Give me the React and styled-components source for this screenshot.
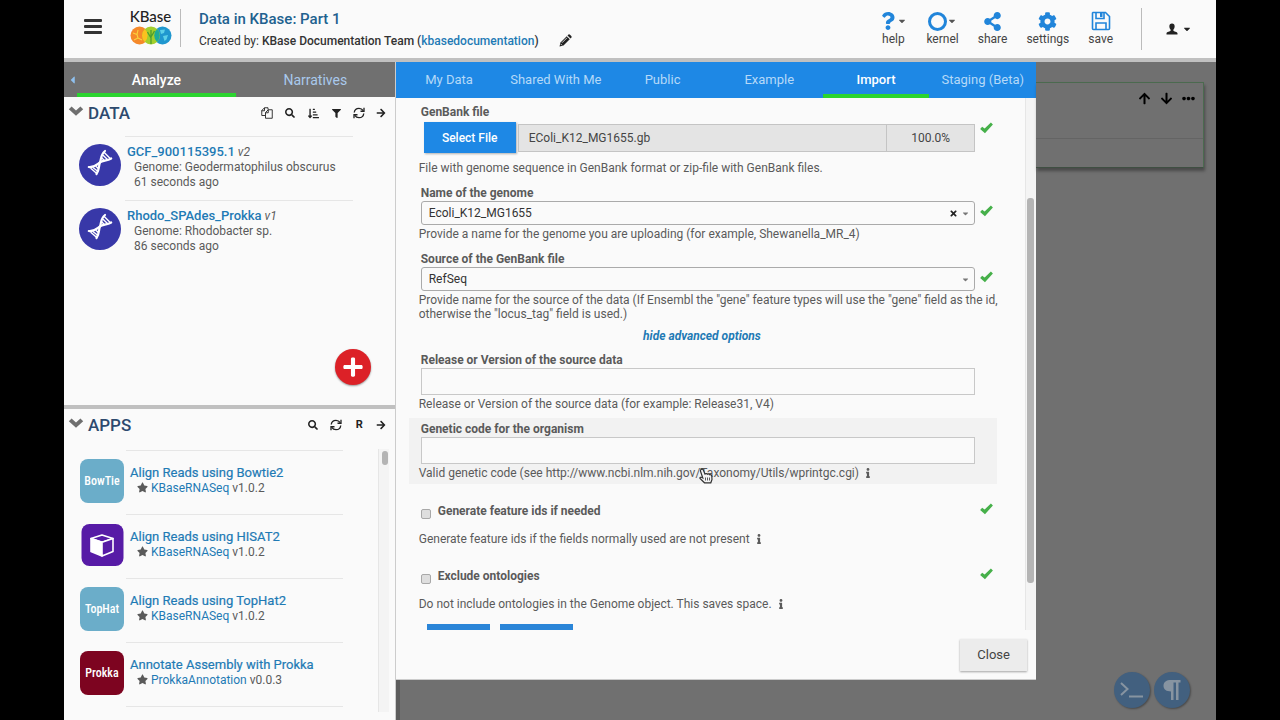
import React, { useState } from 'react';
import styled, { createGlobalStyle, css } from 'styled-components';
import {
  FaArrowDown,
  FaArrowRight,
  FaArrowUp,
  FaCaretDown,
  FaCaretLeft,
  FaCog,
  FaEllipsisH,
  FaFilter,
  FaInfo,
  FaPlus,
  FaQuestion,
  FaSearch,
  FaShareAlt,
  FaSortAmountDownAlt,
  FaStar,
  FaTimes,
} from 'react-icons/fa';

const colors = {
  paper: '#fafafa',
  text: '#5a5a5a',
  dark: '#333',
  link: '#1f7ab5',
  title: '#21618f',
  heading: '#2d4a6e',
  primary: '#1e88e5',
  active: '#2bd42f',
  overlay: '#707070',
  rule: '#e6e6e6',
  bar: '#c0c0c0',
};

const GlobalStyle = createGlobalStyle`
  * {
    box-sizing: border-box;
  }

  body {
    margin: 0;
    background: #000;
    color: ${colors.text};
    font: 12px/16px Roboto, 'Liberation Sans', sans-serif;
  }

  button,
  input,
  select {
    margin: 0;
    border: 0;
    padding: 0;
    background: none;
    color: inherit;
    font: inherit;
  }

  button {
    cursor: pointer;
  }

  a {
    color: ${colors.link};
    text-decoration: none;
  }
`;

/* icons */

const RefreshIcon = () => (
  <svg width="12" height="12" viewBox="0 0 24 24" aria-hidden="true">
    <g fill="none" stroke="currentColor" strokeWidth="2.6">
      <path d="M2.5 11 C3 6 7 2.6 12 2.6 C15.500 2.6 18.500 4.300 20.500 7.200" />
      <path d="M21.500 13 C21 18 17 21.400 12 21.400 C8.500 21.400 5.500 19.700 3.500 16.800" />
      <path d="M22 1.500 V8.500 H15" />
      <path d="M2 22.500 V15.500 H9" />
    </g>
  </svg>
);

const CopyIcon = () => (
  <svg width="12" height="12" viewBox="0 0 24 24" aria-hidden="true">
    <g fill="none" stroke="currentColor" strokeWidth="1.8">
      <path d="M8 17 H1.500 V7 L7 1.500 H14 V5" />
      <path d="M1.500 7.500 H7 V1.500" />
      <path d="M9 11 L14.500 5.500 H22.500 V22.500 H9 Z" />
      <path d="M9 11.500 H14.500 V5.500" />
    </g>
  </svg>
);

const SaveIcon = () => (
  <svg width="20" height="20" viewBox="0 0 20 20" aria-hidden="true">
    <g fill="none" stroke="currentColor" strokeWidth="1.6">
      <path d="M2 1.500 H14.500 L18.500 5.500 V17.500 Q18.500 18.500 17.500 18.500 H2.500 Q1.500 18.500 1.500 17.500 V2 Z" />
      <path d="M5 1.500 V7.500 H13 V1.500" />
      <path d="M5 18.500 V12 H15 V18.500" />
    </g>
    <path d="M9 2 H11.500 V6 H9 Z" fill="currentColor" />
  </svg>
);

const PencilIcon = () => (
  <svg width="13" height="13" viewBox="0 0 26 26" aria-hidden="true">
    <g fill="#222">
      <path d="M1 25 L3 17 L15.500 4.500 L21.500 10.500 L9 23 Z" />
      <path d="M17 3 L19 1 Q20.500 0 22 1.500 L24.500 4 Q26 5.500 25 7 L23 9 Z" />
    </g>
    <path fill="none" stroke="#fafafa" strokeWidth="1.600" d="M6 17.500 L16 7.500 M3.500 20 L6 22.500" />
  </svg>
);

const UserIcon = () => (
  <svg width="12" height="12" viewBox="0 0 24 24" aria-hidden="true">
    <path
      fill="currentColor"
      d="M12 1 C15.500 1 17.500 3.500 17.300 7 C17.200 10 15.800 12 14.800 13.400 L14.800 15.500 C15.500 17 22.500 17.500 23 20.500 V23 H1 V20.500 C1.500 17.500 8.500 17 9.200 15.500 L9.200 13.400 C8.200 12 6.800 10 6.700 7 C6.500 3.500 8.500 1 12 1 Z"
    />
  </svg>
);

const TickIcon = () => (
  <svg width="13" height="12" viewBox="0 0 26 24" aria-hidden="true">
    <path
      fill="#46b04a"
      d="M21.800 1 L25.800 5.200 L9.900 22.300 L0.300 14 L4.300 9.300 L9.300 13.200 Z"
    />
  </svg>
);

const ChevronIcon = () => (
  <svg width="16" height="10" viewBox="0 0 16 10" aria-hidden="true">
    <path fill="#6f6f6f" d="M0.800 3.200 L3.600 0.500 L8 4.500 L12.400 0.500 L15.200 3.200 L8 9.800 Z" />
  </svg>
);

const DnaIcon = () => (
  <svg width="42" height="42" viewBox="0 0 42 42" aria-hidden="true">
    <circle cx="21" cy="21" r="21" fill="#3838a8" />
    <g fill="none" stroke="#fff" strokeLinecap="round">
      <path strokeWidth="2.200" d="M9.800 23 C16 23.500 18 20.500 21 18.300 C24 16.200 28 17.200 32.200 14.500" />
      <path strokeWidth="2.200" d="M17.500 30 C20.500 26 19.500 22 21 18.300 C22.500 14.500 21.500 10.500 26 7" />
      <path strokeWidth="1.400" d="M12 24.500 L17.200 29 M14.200 23.800 L18.700 27.300 M17 22.500 L19.500 24.600" />
      <path strokeWidth="1.400" d="M25.500 8.800 L30.700 14 M23.800 11 L28.200 15.300 M23 14 L25 16.200" />
    </g>
  </svg>
);

const CubeIcon = () => (
  <svg width="44" height="44" viewBox="0 0 44 44" aria-hidden="true">
    <rect width="42" height="42" x="1.500" y="1" rx="8" fill="#571ba6" />
    <g stroke="#fff" strokeWidth="1.600" strokeLinejoin="round">
      <path fill="#571ba6" d="M22 12 L33 15.500 L22 19.300 L11 15.500 Z" />
      <path fill="#fff" d="M11 15.500 L22 19.300 V33 L11 28.500 Z" />
      <path fill="#571ba6" d="M33 15.500 L22 19.300 V33 L33 28.500 Z" />
    </g>
  </svg>
);

const LogoMark = () => (
  <svg width="42" height="19" viewBox="0 0 42 19" aria-hidden="true">
    <circle cx="9.500" cy="9.500" r="9" fill="#f5892a" />
    <circle cx="32.500" cy="9.500" r="9" fill="#1f97cf" />
    <circle cx="21" cy="9.500" r="9" fill="#a3cf2c" />
    <path fill="#fbc21f" d="M14.800 3 A9 9 0 0 1 14.800 16 A9 9 0 0 1 14.800 3 Z" />
    <path fill="#1cab9a" d="M27 3 A9 9 0 0 1 27 16 A9 9 0 0 1 27 3 Z" />
    <path
      fill="none"
      stroke="#fbd23c"
      strokeWidth="1.100"
      d="M3 7 L7 8.500 L8 4 M7 8.500 L8 12 L4 14 M8 12 L12 14"
    />
    <path
      fill="none"
      stroke="#4c9e2f"
      strokeWidth="1.300"
      d="M21 18 V9 M21 12 L17.500 6 M21 11 L24.500 5 M21 9 V4"
    />
    <path fill="#5cd0e8" d="M30 4 L35 3.500 L34 7 L31 8 Z M33 10 L38 9 L36.500 13.500 L34.500 15 Z" />
  </svg>
);

const TerminalIcon = () => (
  <svg width="26" height="18" viewBox="0 0 26 18" aria-hidden="true">
    <g fill="none" stroke="#8794a1" strokeWidth="2">
      <path d="M2 2 L8.500 8 L2 14" />
      <path d="M10 15.500 H24" />
    </g>
  </svg>
);

const ParagraphIcon = () => (
  <svg width="18" height="22" viewBox="0 0 18 22" aria-hidden="true">
    <path
      fill="#8794a1"
      d="M8 1 H17.500 V3.500 H15.500 V21 H13 V3.500 H10.500 V21 H8 V12.500 C3.500 12.500 0.500 10.500 0.500 6.800 C0.500 3 3.500 1 8 1 Z"
    />
  </svg>
);

const HandIcon = () => (
  <svg width="14" height="16" viewBox="0 0 14 16" aria-hidden="true">
    <path
      fill="#f4f4f4"
      stroke="#333"
      strokeWidth="1.200"
      d="M2 1.500 C3 0.600 4 1.200 4.400 2.200 L6 6 C7 5.300 8 5.500 8.400 6.200 C9.300 5.700 10.200 6 10.600 6.800 C11.800 6.400 12.600 7 12.800 8.200 L13 11.500 L11.800 14.800 H5.500 L1 10.500 C0.600 9.500 1.800 8.800 3 9.600 L3.800 10 L1.600 3.500 C1.300 2.600 1.400 2 2 1.500 Z"
    />
    <path stroke="#333" strokeWidth="0.800" d="M6.500 9.500 V12.500 M8.500 9.500 V12.500 M10.500 9.500 V12.500" />
  </svg>
);

/* data */

const tools = [
  { label: 'help', icon: <FaQuestion size={18} />, menu: true },
  { label: 'kernel', icon: 'ring', menu: true },
  { label: 'share', icon: <FaShareAlt size={19} /> },
  { label: 'settings', icon: <FaCog size={19} /> },
  { label: 'save', icon: <SaveIcon /> },
];

const dataItems = [
  {
    name: 'GCF_900115395.1',
    version: 'v2',
    type: 'Genome: Geodermatophilus obscurus',
    age: '61 seconds ago',
  },
  {
    name: 'Rhodo_SPAdes_Prokka',
    version: 'v1',
    type: 'Genome: Rhodobacter sp.',
    age: '86 seconds ago',
  },
];

const apps = [
  { name: 'Align Reads using Bowtie2', module: 'KBaseRNASeq', version: 'v1.0.2', badge: 'BowTie', color: '#6badc9' },
  { name: 'Align Reads using HISAT2', module: 'KBaseRNASeq', version: 'v1.0.2' },
  { name: 'Align Reads using TopHat2', module: 'KBaseRNASeq', version: 'v1.0.2', badge: 'TopHat', color: '#6badc9' },
  { name: 'Annotate Assembly with Prokka', module: 'ProkkaAnnotation', version: 'v0.0.3', badge: 'Prokka', color: '#7d0420' },
];

const importTabs = ['My Data', 'Shared With Me', 'Public', 'Example', 'Import', 'Staging (Beta)'];

/* components */

const Header = () => (
  <SHeader>
    <MenuButton aria-label="Menu">
      <span />
      <span />
      <span />
    </MenuButton>
    <Logo href="#home">
      KBase
      <LogoMark />
    </Logo>
    <Heading>
      <h1>Data in KBase: Part 1</h1>
      <p>
        Created by:{' '}
        <b>
          KBase Documentation Team (<a href="#user">kbasedocumentation</a>)
        </b>
        <IconButton aria-label="Edit">
          <PencilIcon />
        </IconButton>
      </p>
    </Heading>
    <Tools>
      {tools.map(({ label, icon, menu }) => (
        <Tool key={label}>
          <span>
            {icon === 'ring' ? <Ring /> : icon}
            {menu && <FaCaretDown size={10} color="#555" />}
          </span>
          {label}
        </Tool>
      ))}
    </Tools>
    <UserButton aria-label="User">
      <UserIcon />
      <FaCaretDown size={10} />
    </UserButton>
  </SHeader>
);

const DataSection = () => (
  <Section $grow={308}>
    <SectionHeader>
      <ChevronIcon />
      <h2>DATA</h2>
      <IconButton aria-label="Copy"><CopyIcon /></IconButton>
      <IconButton aria-label="Search"><FaSearch size={10} /></IconButton>
      <IconButton aria-label="Sort"><FaSortAmountDownAlt size={11} /></IconButton>
      <IconButton aria-label="Filter"><FaFilter size={9} /></IconButton>
      <IconButton aria-label="Refresh"><RefreshIcon /></IconButton>
      <IconButton aria-label="Expand"><FaArrowRight size={10} /></IconButton>
    </SectionHeader>
    <List $pad="11px 42px 0 15px">
      {dataItems.map(({ name, version, type, age }) => (
        <DataItem key={name}>
          <DnaIcon />
          <div>
            <a href="#data">{name}</a> <i>{version}</i>
            <p>{type}</p>
            <p>{age}</p>
          </div>
        </DataItem>
      ))}
    </List>
    <AddButton aria-label="Add data">
      <FaPlus size={22} />
    </AddButton>
  </Section>
);

const AppsSection = () => (
  <Section $grow={311}>
    <SectionHeader>
      <ChevronIcon />
      <h2>APPS</h2>
      <IconButton aria-label="Search"><FaSearch size={10} /></IconButton>
      <IconButton aria-label="Refresh"><RefreshIcon /></IconButton>
      <IconButton>R</IconButton>
      <IconButton aria-label="Expand"><FaArrowRight size={10} /></IconButton>
    </SectionHeader>
    <Scroller>
      <List $pad="1px 35px 0 16px">
        {apps.map(({ name, module, version, badge, color }) => (
          <AppItem key={name}>
            {badge ? <Badge $color={color}>{badge}</Badge> : <CubeIcon />}
            <div>
              <a href="#app">{name}</a>
              <p>
                <FaStar size={11} />
                <a href="#module">{module}</a> {version}
              </p>
            </div>
          </AppItem>
        ))}
        <EndRule />
      </List>
      <Track>
        <Thumb />
      </Track>
    </Scroller>
  </Section>
);

const Tick = () => (
  <STick>
    <TickIcon />
  </STick>
);

const ImportForm = () => {
  const [file] = useState('EColi_K12_MG1655.gb');
  const [release, setRelease] = useState('');
  const [code, setCode] = useState('');

  return (
    <Form onSubmit={e => e.preventDefault()}>
      <Field>
        <label htmlFor="file">GenBank file</label>
        <Row $upload>
          <SelectFile type="button">Select File</SelectFile>
          <FileName id="file" readOnly value={file} />
          <Progress>100.0%</Progress>
          <Tick />
        </Row>
        <Help $gap={8}>
          File with genome sequence in GenBank format or zip-file with GenBank files.
        </Help>
      </Field>
      <Field>
        <label htmlFor="name">Name of the genome</label>
        <Row>
          <SelectBox>
            <select id="name">
              <option>Ecoli_K12_MG1655</option>
            </select>
            <button type="button" aria-label="Clear">
              <FaTimes size={9} />
            </button>
            <FaCaretDown size={9} color="#777" />
          </SelectBox>
          <Tick />
        </Row>
        <Help>Provide a name for the genome you are uploading (for example, Shewanella_MR_4)</Help>
      </Field>
      <Field>
        <label htmlFor="source">Source of the GenBank file</label>
        <Row>
          <SelectBox>
            <select id="source">
              <option>RefSeq</option>
            </select>
            <FaCaretDown size={9} color="#777" />
          </SelectBox>
          <Tick />
        </Row>
        <Help>
          Provide name for the source of the data (If Ensembl the "gene" feature types will use the
          "gene" field as the id, otherwise the "locus_tag" field is used.)
        </Help>
      </Field>
      <Advanced href="#advanced">hide advanced options</Advanced>
      <Field>
        <label htmlFor="release">Release or Version of the source data</label>
        <Row>
          <TextInput id="release" value={release} onChange={e => setRelease(e.target.value)} />
          <STick />
        </Row>
        <Help>Release or Version of the source data (for example: Release31, V4)</Help>
      </Field>
      <Field $hover>
        <label htmlFor="code">Genetic code for the organism</label>
        <Row>
          <TextInput id="code" value={code} onChange={e => setCode(e.target.value)} />
          <STick />
        </Row>
        <Help>
          Valid genetic code (see http://www.ncbi.nlm.nih.gov/
          <Pointer>
            <HandIcon />
          </Pointer>
          Taxonomy/Utils/wprintgc.cgi)
          <FaInfo size={10} />
        </Help>
      </Field>
      <Field $check>
        <Row>
          <CheckLabel>
            <input type="checkbox" />
            Generate feature ids if needed
          </CheckLabel>
          <Tick />
        </Row>
        <Help $gap={13}>
          Generate feature ids if the fields normally used are not present
          <FaInfo size={10} />
        </Help>
      </Field>
      <Field $check>
        <Row>
          <CheckLabel>
            <input type="checkbox" />
            Exclude ontologies
          </CheckLabel>
          <Tick />
        </Row>
        <Help $gap={13}>
          Do not include ontologies in the Genome object. This saves space.
          <FaInfo size={10} />
        </Help>
      </Field>
      <Actions>
        <ActionButton $width={63} aria-label="Import" />
        <ActionButton $width={73} aria-label="Reset" type="reset" />
      </Actions>
    </Form>
  );
};

const App = () => (
  <Stage>
    <GlobalStyle />
    <Header />
    <Workspace>
      <Sidebar>
        <SideTabs>
          <IconButton aria-label="Collapse"><FaCaretLeft size={12} color="#8fc1f0" /></IconButton>
          <SideTab $active>Analyze</SideTab>
          <SideTab>Narratives</SideTab>
        </SideTabs>
        <DataSection />
        <Splitter />
        <AppsSection />
      </Sidebar>
      <PanelColumn>
        <Panel>
          <Tabs>
            {importTabs.map(tab => (
              <Tab key={tab} $active={tab === 'Import'}>
                {tab}
              </Tab>
            ))}
          </Tabs>
          <PanelBody>
            <ImportForm />
            <Track $wide>
              <Thumb $wide />
            </Track>
          </PanelBody>
          <Footer>
            <CloseButton>Close</CloseButton>
          </Footer>
        </Panel>
        <EdgeShadow />
      </PanelColumn>
      <Notebook>
        <Cell>
          <CellTools>
            <IconButton aria-label="Move up"><FaArrowUp size={13} /></IconButton>
            <IconButton aria-label="Move down"><FaArrowDown size={13} /></IconButton>
            <IconButton aria-label="More"><FaEllipsisH size={13} /></IconButton>
          </CellTools>
        </Cell>
        <FloatingButtons>
          <RoundButton aria-label="Add code cell"><TerminalIcon /></RoundButton>
          <RoundButton aria-label="Add text cell"><ParagraphIcon /></RoundButton>
        </FloatingButtons>
      </Notebook>
    </Workspace>
  </Stage>
);

export default App;

/* styles */

const center = css`
  display: flex;
  align-items: center;
  justify-content: center;
`;

const Stage = styled.div`
  display: flex;
  flex-direction: column;
  height: 100vh;
  margin: 0 5%;
  overflow: hidden;
  background: ${colors.overlay};
`;

const IconButton = styled.button`
  ${center};
  color: #222;
  font-weight: 700;
  font-size: 11px;
`;

const MenuButton = styled.button`
  display: grid;
  gap: 3px;
  width: 18px;
  margin-bottom: 6px;

  span {
    height: 3px;
    border-radius: 1px;
    background: #333;
  }
`;

const SHeader = styled.header`
  display: flex;
  align-items: center;
  flex: none;
  height: 62px;
  padding: 0 24px 0 20px;
  border-bottom: 4px solid ${colors.bar};
  background: ${colors.paper};
`;

const Logo = styled.a`
  display: flex;
  flex-direction: column;
  align-items: center;
  width: 79px;
  margin-bottom: 2px;
  padding-left: 19px;
  border-right: 1px solid #bbb;
  color: #222;
  font: 500 15px/14px Lato, sans-serif;

  svg {
    margin: 3px 0 2px;
  }
`;

const Heading = styled.div`
  flex: 1;
  padding-left: 18px;

  h1 {
    margin: 0 0 5px;
    color: ${colors.title};
    font: 500 15px/18px Roboto, sans-serif;
  }

  p {
    display: flex;
    align-items: center;
    margin: 0;
    color: ${colors.dark};
    white-space: pre;
  }

  b {
    font-weight: 500;
  }

  button {
    margin-left: 20px;
  }
`;

const Tools = styled.nav`
  display: flex;
  gap: 19px;
  margin-right: 28px;
`;

const Tool = styled.button`
  color: #444;

  span {
    ${center};
    height: 20px;
    color: #2185da;
  }
`;

const Ring = styled.i`
  width: 19px;
  height: 19px;
  border: 3px solid #2185da;
  border-radius: 50%;
`;

const UserButton = styled.button`
  ${center};
  gap: 4px;
  height: 42px;
  padding-left: 24px;
  border-left: 1px solid #bbb;
  color: #222;
`;

const Workspace = styled.main`
  display: flex;
  flex: 1;
  min-height: 0;
`;

const Sidebar = styled.aside`
  display: flex;
  flex-direction: column;
  flex: 331 1 0;
  min-width: 0;
  border-right: 1px solid #ccc;
  background: ${colors.paper};
`;

const SideTabs = styled.div`
  display: flex;
  flex: none;
  height: 35px;
  padding-left: 4px;
  background: ${colors.overlay};

  ${IconButton} {
    width: 9px;
  }
`;

const SideTab = styled.button`
  flex: 1;
  border-bottom: 4px solid ${p => (p.$active ? colors.active : 'transparent')};
  padding-top: 4px;
  color: ${p => (p.$active ? '#fff' : '#a9c9ec')};
  font-weight: ${p => (p.$active ? 500 : 400)};
  font-size: 14px;
`;

const Section = styled.section`
  position: relative;
  display: flex;
  flex-direction: column;
  flex: ${p => p.$grow} 1 0;
  min-height: 0;
`;

const SectionHeader = styled.div`
  display: flex;
  align-items: center;
  flex: none;
  height: 24px;
  margin-top: 4px;
  padding: 0 4px;

  h2 {
    flex: 1;
    margin: 0 0 0 4px;
    color: ${colors.heading};
    font: 500 17px/24px Roboto, sans-serif;
  }

  > svg {
    margin-bottom: 4px;
  }

  ${IconButton} {
    width: 23px;
    height: 20px;

    &:last-child {
      width: 20px;
    }
  }
`;

const List = styled.div`
  flex: 1;
  padding: ${p => p.$pad};
`;

const itemRule = css`
  &::before {
    content: '';
    position: absolute;
    top: 0;
    right: 0;
    left: 46px;
    border-top: 1px solid ${colors.rule};
  }
`;

const DataItem = styled.article`
  position: relative;
  display: flex;
  gap: 6px;
  height: 64px;
  padding-top: 8px;
  white-space: nowrap;
  ${itemRule};

  a {
    font-weight: 500;
    font-size: 13px;
  }

  p {
    margin: 0 0 0 7px;
    line-height: 15px;
  }
`;

const AddButton = styled.button`
  ${center};
  position: absolute;
  right: 24px;
  bottom: 20px;
  width: 36px;
  height: 36px;
  border-radius: 50%;
  background: #dc2127;
  box-shadow: 0 1px 2px rgba(0, 0, 0, 0.4);
  color: #fff;
`;

const Splitter = styled.hr`
  flex: none;
  width: 100%;
  height: 4px;
  margin: 0;
  border: 0;
  background: ${colors.bar};
`;

const Scroller = styled.div`
  display: flex;
  flex: 1;
  min-height: 0;
  margin: 12px 6px 8px 0;
`;

const AppItem = styled.article`
  position: relative;
  display: flex;
  gap: 6px;
  height: 64px;
  padding-top: 9px;
  white-space: nowrap;
  ${itemRule};

  > div {
    padding-top: 6px;
  }

  div > a {
    font-size: 13px;
    -webkit-text-stroke: 0.2px;
  }

  p {
    margin: 0 0 0 7px;
    line-height: 15px;
  }

  p svg {
    margin-right: 3px;
    vertical-align: -1px;
  }
`;

const EndRule = styled.div`
  margin-left: 46px;
  border-top: 1px solid ${colors.rule};
`;

const Badge = styled.span`
  ${center};
  width: 44px;
  height: 44px;
  border-radius: 8px;
  background: ${p => p.$color};
  color: #fff;
  font: 500 12px 'Roboto Condensed', Roboto, sans-serif;
`;

const Track = styled.div`
  width: 11px;
  border-left: 1px solid ${colors.rule};
  padding: ${p => (p.$wide ? '100px 2px 47px 1px' : '2px 1px 0 3px')};
  background: #f4f4f4;
`;

const Thumb = styled.div`
  height: ${p => (p.$wide ? '100%' : '14px')};
  border-radius: 3px;
  background: #b4b4b4;
`;

const PanelColumn = styled.div`
  display: flex;
  flex-direction: column;
  flex: 641 1 0;
  min-width: 0;
`;

const Panel = styled.section`
  display: flex;
  flex-direction: column;
  flex: 1;
  min-height: 0;
  border-bottom: 1px solid #ccc;
  background: ${colors.paper};
`;

const Tabs = styled.nav`
  display: flex;
  flex: none;
  height: 36px;
  background: ${colors.primary};
`;

const Tab = styled.button`
  flex: 1;
  border-bottom: 4px solid ${p => (p.$active ? colors.active : 'transparent')};
  padding-top: 4px;
  color: ${p => (p.$active ? '#fff' : '#b5d9f8')};
  font-weight: ${p => (p.$active ? 500 : 400)};
  font-size: 13px;
`;

const PanelBody = styled.div`
  display: flex;
  flex: 1;
  min-height: 0;
  overflow: hidden;
`;

const Form = styled.form`
  display: flex;
  flex-direction: column;
  flex: 1;
  gap: 3px;
  min-width: 0;
  padding: 3px 28px 0 13px;
`;

const Field = styled.div`
  display: flex;
  flex-direction: column;
  padding: ${p => (p.$check ? '16px 0 3px 10px' : '3px 0 4px 10px')};
  background: ${p => (p.$hover ? '#f2f2f2' : 'none')};

  label {
    margin-left: 2px;
    font-weight: 700;
  }
`;

const Row = styled.div`
  display: flex;
  align-items: ${p => (p.$upload ? 'flex-start' : 'center')};
  margin-left: 2px;
  padding-top: ${p => (p.$upload ? 2 : 0)}px;
`;

const STick = styled.span`
  display: flex;
  flex: none;
  width: 22px;
  padding: 0 0 4px 5px;
`;

const Help = styled.p`
  margin: ${p => p.$gap || 2}px -16px 0 0;
  line-height: 14px;

  > svg {
    margin-left: 4px;
    vertical-align: -1px;
  }
`;

const SelectFile = styled.button`
  flex: none;
  width: 92px;
  height: 31px;
  margin: 0 2px 0 3px;
  background: ${colors.primary};
  box-shadow: 1px 1px 2px rgba(0, 0, 0, 0.3);
  color: #fff;
  font-weight: 500;
`;

const FileName = styled.input`
  flex: 1;
  min-width: 0;
  height: 28px;
  margin-top: 2px;
  border: 1px solid #c4c4c4;
  padding: 0 10px;
  background: #e4e4e4;
  color: #444;
`;

const Progress = styled.output`
  ${center};
  flex: none;
  width: 88px;
  height: 28px;
  margin-top: 2px;
  border: 1px solid #c4c4c4;
  border-left: 0;
  background: #e4e4e4;
  color: #444;
`;

const SelectBox = styled.div`
  ${center};
  flex: 1;
  height: 24px;
  border: 1px solid #aaa;
  border-radius: 3px;
  padding-right: 4px;

  select {
    flex: 1;
    height: 22px;
    padding-left: 7px;
    appearance: none;
    outline: 0;
    color: #333;
  }

  button {
    ${center};
    width: 16px;
    color: #222;
  }
`;

const Advanced = styled.a`
  align-self: center;
  margin-right: 2px;
  padding-bottom: 2px;
  font-style: italic;
  font-weight: 700;
`;

const TextInput = styled.input`
  flex: 1;
  min-width: 0;
  height: 27px;
  border: 1px solid #c8c8c8;
  padding: 0 8px;
  background: ${colors.paper};
`;

const Pointer = styled.span`
  position: relative;

  svg {
    position: absolute;
    top: 2px;
    left: -1px;
  }
`;

const CheckLabel = styled.label`
  display: flex;
  flex: 1;
  gap: 7px;

  && {
    margin-left: 0;
  }

  input {
    width: 10px;
    height: 10px;
    margin-top: 6px;
    appearance: none;
    border: 1px solid #a8a8a8;
    border-radius: 2px;
    background: #dedede;

    &:checked {
      background: ${colors.primary};
    }
  }
`;

const Actions = styled.div`
  display: flex;
  flex: none;
  gap: 10px;
  padding: 7px 0 0 18px;
`;

const ActionButton = styled.button`
  width: ${p => p.$width}px;
  height: 31px;
  background: #2a85d8;
`;

const Footer = styled.footer`
  display: flex;
  flex: none;
  justify-content: flex-end;
  padding: 9px 9px 8px;
`;

const CloseButton = styled.button`
  width: 67px;
  height: 32px;
  background: #ececec;
  box-shadow: 0 1px 2px rgba(0, 0, 0, 0.35);
  color: #444;
  font-size: 13px;
`;

const EdgeShadow = styled.div`
  flex: none;
  width: 4px;
  height: 40px;
  background: #5c5c5c;
`;

const Notebook = styled.section`
  display: flex;
  flex-direction: column;
  justify-content: space-between;
  flex: 180 1 0;
  min-width: 0;
  padding: 20px 0 12px;
`;

const Cell = styled.article`
  height: 86px;
  margin-right: 12px;
  border: 1px solid #4b6a4f;
  border-left: 0;
  border-bottom-color: #3f4f42;
  box-shadow: 1px 3px 3px rgba(0, 0, 0, 0.35);
`;

const CellTools = styled.div`
  display: flex;
  align-items: flex-start;
  justify-content: flex-end;
  gap: 9px;
  height: 56px;
  padding: 9px 8px 0 0;
  border-bottom: 1px solid #646464;

  ${IconButton} {
    color: #000;
  }
`;

const FloatingButtons = styled.div`
  display: flex;
  justify-content: flex-end;
  gap: 4px;
  padding-right: 26px;
`;

const RoundButton = styled.button`
  ${center};
  width: 36px;
  height: 36px;
  border-radius: 50%;
  background: #42607f;
  box-shadow: 1px 1px 2px rgba(0, 0, 0, 0.35);
`;
